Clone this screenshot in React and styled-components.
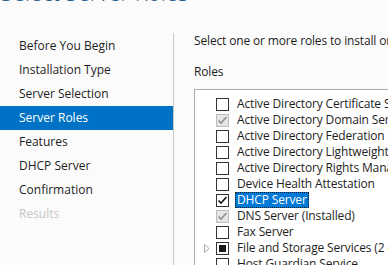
import React from 'react';
import styled, { createGlobalStyle } from 'styled-components';

const GlobalStyle = createGlobalStyle`
    body {
        margin: 0;
        background: #fbfbfb;
        overflow: hidden;
    }
`;

const Page = styled.div`
    width: 388px;
    height: 265px;
    overflow: hidden;
    font-family: "Open Sans", "Noto Sans", sans-serif;
    font-size: 12px;
    color: #1e1e1e;
`;

const Title = styled.h1`
    margin: -23px 0 0 1px;
    height: 32px;
    font-size: 22px;
    font-weight: 300;
    line-height: 30px;
    color: #1f5f8f;
    white-space: nowrap;
`;

const Body = styled.div`
    display: flex;
    margin-top: 24px;
    height: 232px;
`;

const Sidebar = styled.nav`
    width: 173px;
    flex-shrink: 0;
    padding-top: 1px;
    border-right: 1px solid #c8c8c8;
`;

const NavItem = styled.div`
    height: 24px;
    line-height: 24px;
    padding-left: 19px;
    background: ${p => (p.$active ? '#0072c6' : 'transparent')};
    color: ${p => (p.$active ? '#ffffff' : p.$disabled ? '#c6c6c6' : '#1e1e1e')};
    white-space: nowrap;
`;

const Content = styled.section`
    flex: 1;
    padding-left: 20px;
    display: flex;
    flex-direction: column;
    min-width: 0;
    letter-spacing: -0.15px;
`;

const Intro = styled.p`
    margin: 0;
    line-height: 16px;
    white-space: nowrap;
`;

const Heading = styled.h2`
    margin: 15px 0 0;
    font-size: 12px;
    font-weight: normal;
    line-height: 16px;
`;

const ListBox = styled.div`
    margin-top: 9px;
    flex: 1;
    border: 1px solid #abadb3;
    border-right: none;
    border-bottom: none;
    background: #ffffff;
    padding-top: 6px;
`;

const Row = styled.div`
    display: flex;
    align-items: center;
    height: 16px;
    white-space: nowrap;
`;

const Expander = styled.div`
    width: 21px;
    height: 16px;
    flex-shrink: 0;
    display: flex;
    align-items: center;
    padding-left: 9px;
    box-sizing: border-box;
`;

const Box = styled.div`
    width: 13px;
    height: 13px;
    box-sizing: border-box;
    flex-shrink: 0;
    border: 1px solid ${p => (p.$disabled ? '#bcbcbc' : '#333333')};
    background: ${p => (p.$disabled ? '#e6e6e6' : '#ffffff')};
    display: flex;
    align-items: center;
    justify-content: center;
`;

const Fill = styled.div`
    width: 7px;
    height: 7px;
    background: #1a1a1a;
`;

const Label = styled.span`
    margin-left: 6px;
    padding: 0 2px;
    height: 16px;
    line-height: 16px;
    box-sizing: border-box;
    color: ${p => (p.$selected ? '#ffffff' : '#1e1e1e')};
    background: ${p => (p.$selected ? '#0078d7' : 'transparent')};
    outline: ${p => (p.$selected ? '1px dotted #1e1e1e' : 'none')};
    outline-offset: -1px;
`;

const Check = ({ color }) => (
    <svg width="11" height="11" viewBox="0 0 11 11">
        <polyline points="1.5,5.5 4,8 9.5,2" fill="none" stroke={color} strokeWidth="1.6" />
    </svg>
);

const Arrow = () => (
    <svg width="6" height="9" viewBox="0 0 6 9">
        <polygon points="0.5,0.5 5,4.5 0.5,8.5" fill="none" stroke="#a6a6a6" strokeWidth="1" />
    </svg>
);

const steps = [
    'Before You Begin',
    'Installation Type',
    'Server Selection',
    'Server Roles',
    'Features',
    'DHCP Server',
    'Confirmation',
    'Results',
];

const roles = [
    { name: 'Active Directory Certificate Services' },
    { name: 'Active Directory Domain Services (Installed)', state: 'installed' },
    { name: 'Active Directory Federation Services' },
    { name: 'Active Directory Lightweight Directory Services' },
    { name: 'Active Directory Rights Management Services' },
    { name: 'Device Health Attestation' },
    { name: 'DHCP Server', state: 'checked', selected: true },
    { name: 'DNS Server (Installed)', state: 'installed' },
    { name: 'Fax Server' },
    { name: 'File and Storage Services (2 of 12 installed)', state: 'partial', expandable: true },
    { name: 'Host Guardian Service' },
];

const RoleBox = ({ state }) => {
    if (state === 'installed') return <Box $disabled><Check color="#8c8c8c" /></Box>;
    if (state === 'checked') return <Box><Check color="#111111" /></Box>;
    if (state === 'partial') return <Box><Fill /></Box>;
    return <Box />;
};

const App = () => (
    <Page>
        <GlobalStyle />
        <Title>Select Server Roles</Title>
        <Body>
            <Sidebar>
                {steps.map((s, i) => (
                    <NavItem key={s} $active={i === 3} $disabled={s === 'Results'}>{s}</NavItem>
                ))}
            </Sidebar>
            <Content>
                <Intro>Select one or more roles to install on the selected server.</Intro>
                <Heading>Roles</Heading>
                <ListBox>
                    {roles.map(r => (
                        <Row key={r.name}>
                            <Expander>{r.expandable && <Arrow />}</Expander>
                            <RoleBox state={r.state} />
                            <Label $selected={r.selected}>{r.name}</Label>
                        </Row>
                    ))}
                </ListBox>
            </Content>
        </Body>
    </Page>
);

export default App;
